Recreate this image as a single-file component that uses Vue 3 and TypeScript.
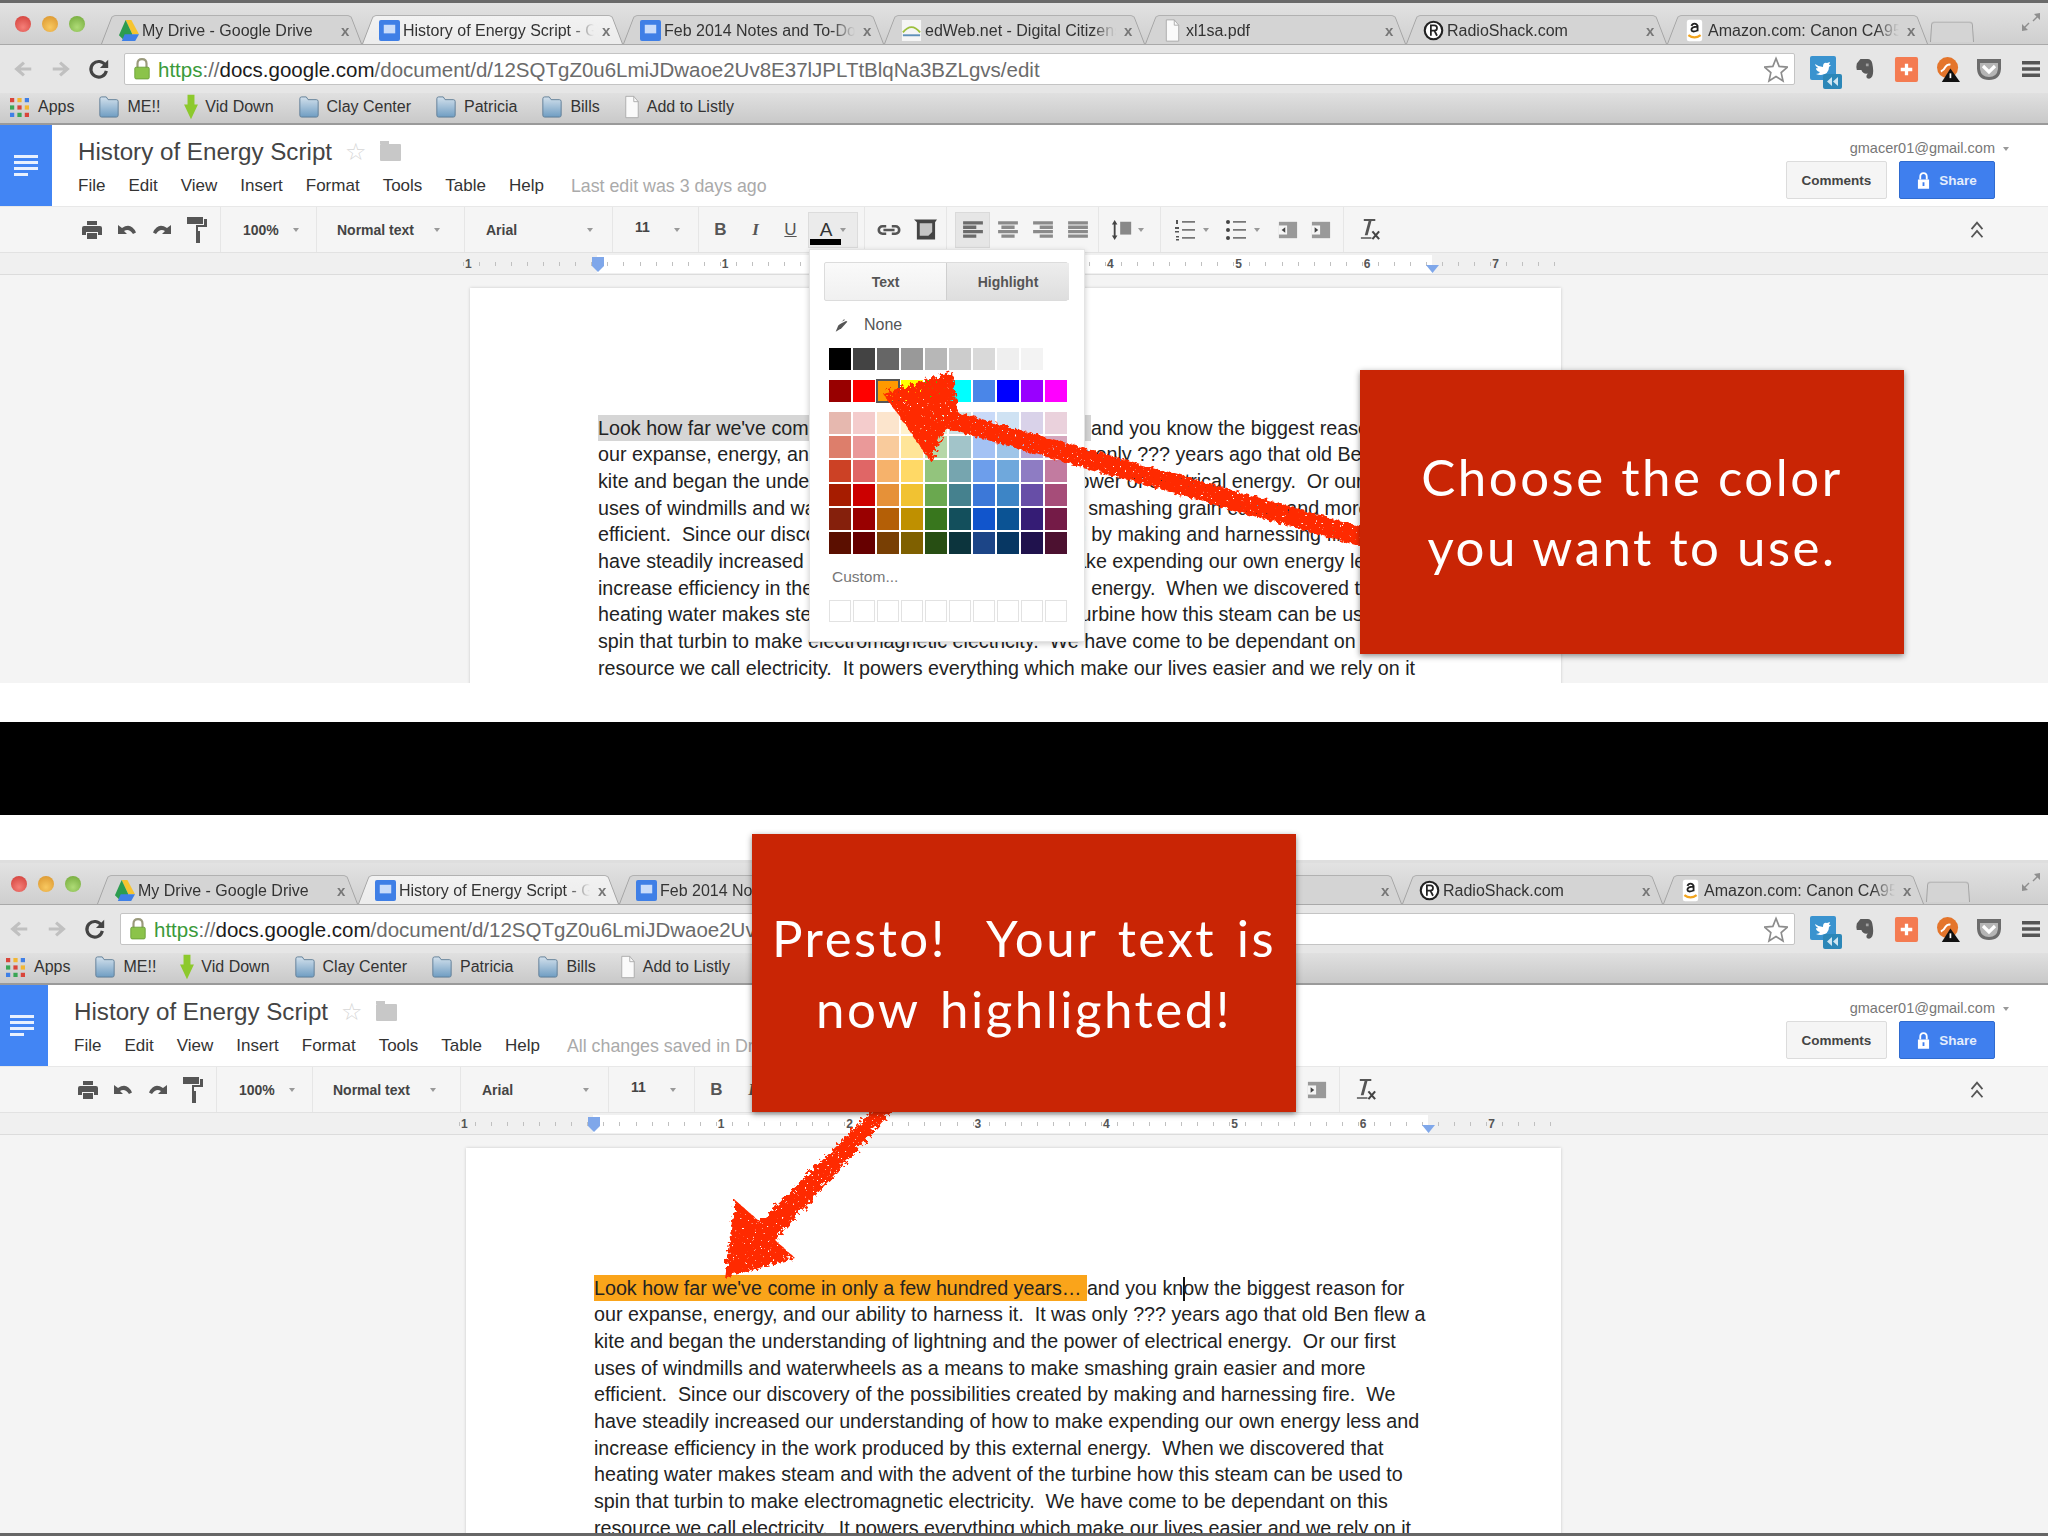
<!-- two frames of a "highlight your text" tutorial slide -->
<template>
  <div class="stage">
    <svg class="sprite" width="0" height="0" aria-hidden="true">
      <defs>
        <linearGradient id="folder-fill" x1="0" y1="0" x2="0" y2="1">
          <stop offset="0" stop-color="#d2e0ec" />
          <stop offset="1" stop-color="#6f9dc2" />
        </linearGradient>
        <filter id="rough" x="-10%" y="-10%" width="120%" height="120%">
          <feTurbulence type="fractalNoise" baseFrequency="0.22" numOctaves="3" seed="4" result="n" />
          <feDisplacementMap in="SourceGraphic" in2="n" scale="10" result="shape" />
          <feTurbulence type="fractalNoise" baseFrequency="0.4" numOctaves="2" seed="9" />
          <feColorMatrix type="matrix" values="0 0 0 0 0  0 0 0 0 0  0 0 0 0 0  -14 0 0 0 10.8" result="holes" />
          <feComposite in="shape" in2="holes" operator="in" />
        </filter>
      </defs>
      <symbol id="i-folder" viewBox="0 0 24 26">
        <path d="M2 4q0-2 2-2h5l2 3h9q2 0 2 2v15q0 2-2 2H4q-2 0-2-2z" fill="url(#folder-fill)" stroke="#5d7c95" />
      </symbol>
      <symbol id="i-page" viewBox="0 0 18 26">
        <path d="M2 1h9l5 6v18H2z" fill="#fafafa" stroke="#a8a8a8" />
        <path d="M11 1v6h5" fill="none" stroke="#a8a8a8" />
      </symbol>
      <symbol id="i-docs" viewBox="0 0 22 24">
        <rect x="0" y="1" width="22" height="22" rx="2" fill="#3f7fe6" />
        <rect x="5" y="6" width="12" height="9" fill="#c9dcfa" />
      </symbol>
      <symbol id="i-drive" viewBox="0 0 22 24">
        <path d="M8 1h6l8 15h-7z" fill="#f6c42f" />
        <path d="M8 1l7 15-4 7H7L1 17z" fill="#2c9c4f" />
        <path d="M7 16h15l-4 7H4z" fill="#3f7fe6" />
      </symbol>
      <symbol id="i-edweb" viewBox="0 0 22 24">
        <rect x="1" y="1" width="20" height="22" fill="#f5f5f5" />
        <path d="M2 14q9-11 18 0" fill="none" stroke="#9cbf3c" stroke-width="2" />
        <path d="M2 17h18" stroke="#5e8fb8" stroke-width="2" />
      </symbol>
      <symbol id="i-radio" viewBox="0 0 24 24">
        <circle cx="12" cy="12" r="10" fill="#fff" stroke="#222" stroke-width="2.4" />
        <path d="M9 18V6h4q3 0 3 3t-3 3H9m4 0l3 6" fill="none" stroke="#222" stroke-width="2" />
      </symbol>
      <symbol id="i-amazon" viewBox="0 0 22 30">
        <rect x="1" y="1" width="20" height="28" rx="3" fill="#fff" />
        <path d="M7 9q1-3 4-3t4 3v7m0-6q-8 0-8 4t8 1" fill="none" stroke="#222" stroke-width="2.4" />
        <path d="M3 21q8 6 16 0" fill="none" stroke="#f2a41e" stroke-width="3" />
      </symbol>
      <symbol id="i-back" viewBox="0 0 24 24"><path d="M21 12H8m5-7l-8 7 8 7" fill="none" stroke="currentColor" stroke-width="3.4" /></symbol>
      <symbol id="i-forward" viewBox="0 0 24 24"><path d="M3 12h13m-5-7l8 7-8 7" fill="none" stroke="currentColor" stroke-width="3.4" /></symbol>
      <symbol id="i-reload" viewBox="0 0 24 24">
        <path d="M19 8a8.5 8.5 0 1 0 1 6" fill="none" stroke="currentColor" stroke-width="3.4" />
        <path d="M22 2v9h-9z" fill="currentColor" />
      </symbol>
      <symbol id="i-lock" viewBox="0 0 20 26">
        <path d="M5 12V7q0-5 5-5t5 5v5" fill="none" stroke="#9a9a7c" stroke-width="2.4" />
        <rect x="2" y="11" width="16" height="13" rx="1.5" fill="#8bc34a" stroke="#6b9f3a" />
      </symbol>
      <symbol id="i-star" viewBox="0 0 26 28">
        <path d="M13 2l3.4 8.6 9 .8-6.8 6 2 9L13 21.600l-7.600 4.800 2-9-6.800-6 9-.8z" fill="#fff" stroke="#8c8c8c" stroke-width="1.8" />
      </symbol>
      <symbol id="i-twitter" viewBox="0 0 34 34">
        <rect x="0" y="0" width="26" height="24" rx="2" fill="#3a93cf" />
        <path d="M5 8q4 3 8 3 0-5 4-4l3-1-1 3 2 0-2 2q0 7-8 8-3 0-5-1 3 0 4-2-4-1-4-4 1 .5 2 0-3-2-3-4z" fill="#fff" />
        <rect x="13" y="18" width="19" height="15" rx="2" fill="#2c87b8" />
        <path d="M17 25.500l5-4.500v9zM23 25.500l5-4.500v9z" fill="#cfe6f2" />
      </symbol>
      <symbol id="i-evernote" viewBox="0 0 22 28">
        <path d="M6 3h8q4 0 5 5 2 9 0 14-2 4-6 2-1-3 1-5-5 1-7-4H2q-1-3 0-7z" fill="#595959" />
        <path d="M12 8h3v3h-3z" fill="#a0a0a0" />
      </symbol>
      <symbol id="i-plus" viewBox="0 0 26 26">
        <rect x="1" y="0" width="24" height="26" rx="2" fill="#f47b51" />
        <path d="M13 7v12M7 13h12" stroke="#fff" stroke-width="3.400" />
      </symbol>
      <symbol id="i-peak" viewBox="0 0 24 28">
        <circle cx="11" cy="12" r="11" fill="#e4752b" />
        <path d="M4 16q3-1 5-5 2-3 5-2" fill="none" stroke="#fff" stroke-width="2.200" />
        <path d="M14 13l10 14H5z" fill="#111" />
        <path d="M14 18v5" stroke="#fff" stroke-width="1.800" />
      </symbol>
      <symbol id="i-pocket" viewBox="0 0 26 24">
        <path d="M1 2h24v10q-1 11-12 11T1 12z" fill="#6c6c6c" />
        <path d="M4 6h18v6q-1 8-9 8t-9-8z" fill="#b5b5b5" />
        <path d="M7 9l6 6 6-6" fill="none" stroke="#fff" stroke-width="3.200" />
      </symbol>
      <symbol id="i-menu" viewBox="0 0 18 18"><path d="M0 1h18v3.400H0zM0 7.300h18v3.400H0zM0 13.600h18V17H0z" fill="#555" /></symbol>
      <symbol id="i-expand" viewBox="0 0 18 18">
        <path d="M18 0v7l-2.500-2.500-4 4-1-1 4-4L12 1zM0 18v-7l2.500 2.500 4-4 1 1-4 4L6 17z" fill="#8f8f8f" />
      </symbol>
      <symbol id="i-apps" viewBox="0 0 18 18">
        <g v-for="cell in appDots" :key="cell.id">
          <rect :x="cell.x" :y="cell.y" width="4" height="4" :fill="cell.fill" />
        </g>
      </symbol>
      <symbol id="i-bolt" viewBox="0 0 16 30">
        <path d="M4 1h8v11h4L8 29 0 12h4z" fill="#8dc92d" />
      </symbol>
      <symbol id="i-print" viewBox="0 0 22 22">
        <path d="M6 2h10v4H6zM3 7h16q2 0 2 2v7h-4v-3H5v3H1V9q0-2 2-2zM6 14h10v6H6z" fill="#555" />
      </symbol>
      <symbol id="i-undo" viewBox="0 0 22 22"><path d="M2 6v9h9l-3-3q5-3 9 3l3-1.500Q15 3 6 9z" fill="#555" /></symbol>
      <symbol id="i-redo" viewBox="0 0 22 22"><path d="M20 6v9h-9l3-3q-5-3-9 3l-3-1.500Q7 3 16 9z" fill="#555" /></symbol>
      <symbol id="i-roller" viewBox="0 0 22 28">
        <path d="M1 1h16v7H1zM18 3h3v8H12v4h2v12h-4V15h0V9h8z" fill="#555" />
      </symbol>
      <symbol id="i-link" viewBox="0 0 28 16">
        <path d="M11 4H7a4 4 0 0 0 0 8h4M17 4h4a4 4 0 0 1 0 8h-4M8 8h12" fill="none" stroke="#555" stroke-width="2.800" />
      </symbol>
      <symbol id="i-comment" viewBox="0 0 24 24">
        <path d="M0 1h24l-2 3v18H3V4z" fill="#444" />
        <path d="M6 5h13v9l-4 4H6z" fill="#c4c4c4" />
      </symbol>
      <symbol id="i-align-left" viewBox="0 0 20 20"><path d="M1 2h18v3H1zM1 6h12v3H1zM1 10h18v3H1zM1 14h12v3H1z" fill="#6b6b6b" /></symbol>
      <symbol id="i-align-center" viewBox="0 0 20 20"><path d="M1 2h18v3H1zM4 6h12v3H4zM1 10h18v3H1zM4 14h12v3H4z" fill="#8a8a8a" /></symbol>
      <symbol id="i-align-right" viewBox="0 0 20 20"><path d="M1 2h18v3H1zM7 6h12v3H7zM1 10h18v3H1zM7 14h12v3H7z" fill="#8a8a8a" /></symbol>
      <symbol id="i-align-just" viewBox="0 0 20 20"><path d="M1 2h18v3H1zM1 6h18v3H1zM1 10h18v3H1zM1 14h18v3H1z" fill="#8a8a8a" /></symbol>
      <symbol id="i-spacing" viewBox="0 0 24 24">
        <path d="M4 1l3 5H1zM4 23l3-5H1zM3 6h2v12H3z" fill="#444" />
        <path d="M10 3h12v14H10z" fill="#888" />
      </symbol>
      <symbol id="i-numbers" viewBox="0 0 22 24">
        <path d="M2 2h2v4H2zM1 9h4v2H1zM1 13h4v1.500H1zM2 18h3v1.500H2zM2 21h3v1.500H2z" fill="#555" />
        <path d="M8 3h13v1.800H8zM8 11h13v1.800H8zM8 19h13v1.800H8z" fill="#777" />
      </symbol>
      <symbol id="i-bullets" viewBox="0 0 22 24">
        <circle cx="3" cy="4" r="2" fill="#444" /><circle cx="3" cy="12" r="2" fill="#444" /><circle cx="3" cy="20" r="2" fill="#444" />
        <path d="M8 3h13v1.800H8zM8 11h13v1.800H8zM8 19h13v1.800H8z" fill="#777" />
      </symbol>
      <symbol id="i-outdent" viewBox="0 0 22 20">
        <path d="M1 1h20v18H1z" fill="#999" /><path d="M1 5h9v10H1z" fill="#f5f5f5" /><path d="M8 7l-4 3 4 3z" fill="#444" />
      </symbol>
      <symbol id="i-indent" viewBox="0 0 22 20">
        <path d="M1 1h20v18H1z" fill="#999" /><path d="M1 5h9v10H1z" fill="#f5f5f5" /><path d="M4 7l4 3-4 3z" fill="#444" />
      </symbol>
      <symbol id="i-clear" viewBox="0 0 24 26">
        <path d="M5 2h12v2h-4L9 19H6l4-15H5zM2 21h11v1.600H2z" fill="#555" />
        <path d="M14 15l7 8m0-8l-7 8" stroke="#444" stroke-width="2.200" />
      </symbol>
      <symbol id="i-collapse" viewBox="0 0 16 22">
        <path d="M2 10l6-7 6 7M2 19l6-7 6 7" fill="none" stroke="#555" stroke-width="2" />
      </symbol>
      <symbol id="i-share-lock" viewBox="0 0 14 20">
        <path d="M3.500 9V6q0-4 3.500-4t3.500 4v3" fill="none" stroke="#fff" stroke-width="2" />
        <path d="M1 9h12v10H1zM6 12v4h2v-4z" fill="#fff" fill-rule="evenodd" />
      </symbol>
      <symbol id="i-none" viewBox="0 0 18 20">
        <path d="M2 18l3-7 7-8 4 3-7 8z" fill="#555" /><path d="M1 11L17 3" stroke="#fff" stroke-width="1.500" />
      </symbol>
    </svg>

    <section v-for="shot in shots" :key="shot.id" class="shot" :class="`shot--${shot.id}`">
      <div class="browser">
        <div class="tabstrip">
          <div class="lights">
            <span class="light light--red"></span>
            <span class="light light--amber"></span>
            <span class="light light--green"></span>
          </div>
          <div
            v-for="tab in tabs"
            :key="tab.title"
            class="tab"
            :class="{ 'tab--active': tab.active }"
          >
            <svg class="tab-icon"><use :href="`#i-${tab.icon}`" /></svg>
            <span class="tab-title">{{ tab.title }}</span>
            <span class="tab-close">x</span>
          </div>
          <div class="tab tab--new"></div>
          <svg class="expand"><use href="#i-expand" /></svg>
        </div>

        <div class="omnibar">
          <div class="nav">
            <svg class="nav-icon nav-icon--off"><use href="#i-back" /></svg>
            <svg class="nav-icon nav-icon--off"><use href="#i-forward" /></svg>
            <svg class="nav-icon"><use href="#i-reload" /></svg>
          </div>
          <div class="urlbar">
            <svg class="lock"><use href="#i-lock" /></svg>
            <span class="url"><span class="url-scheme">https</span><span class="url-dim">://</span><span class="url-host">docs.google.com</span><span class="url-dim">/document/d/12SQTgZ0u6LmiJDwaoe2Uv8E37lJPLTtBlqNa3BZLgvs/edit</span></span>
            <svg class="star"><use href="#i-star" /></svg>
          </div>
          <div class="extensions">
            <svg class="ext ext--twitter"><use href="#i-twitter" /></svg>
            <svg class="ext ext--evernote"><use href="#i-evernote" /></svg>
            <svg class="ext ext--plus"><use href="#i-plus" /></svg>
            <svg class="ext ext--peak"><use href="#i-peak" /></svg>
            <svg class="ext ext--pocket"><use href="#i-pocket" /></svg>
            <svg class="ext ext--menu"><use href="#i-menu" /></svg>
          </div>
        </div>

        <div class="bookmarks">
          <div v-for="mark in bookmarks" :key="mark.label" class="bookmark">
            <svg class="bookmark-icon" :class="`bookmark-icon--${mark.icon}`"><use :href="`#i-${mark.icon}`" /></svg>
            <span>{{ mark.label }}</span>
          </div>
        </div>

        <header class="doc-header">
          <div class="doc-logo">
            <span></span><span></span><span></span><span class="short"></span>
          </div>
          <div class="doc-meta">
            <div class="doc-title-row">
              <span class="doc-title">History of Energy Script</span>
              <span class="doc-star">☆</span>
              <span class="doc-folder"></span>
            </div>
            <nav class="doc-menu">
              <span v-for="item in menu" :key="item">{{ item }}</span>
              <span class="doc-status">{{ shot.status }}</span>
            </nav>
          </div>
          <div class="doc-account">
            <div class="doc-email">gmacer01@gmail.com <i class="caret"></i></div>
            <div class="doc-actions">
              <button class="btn-comments">Comments</button>
              <button class="btn-share"><svg class="share-lock"><use href="#i-share-lock" /></svg>Share</button>
            </div>
          </div>
        </header>

        <div class="toolbar">
          <div class="group group--history">
            <svg v-for="name in ['print', 'undo', 'redo', 'roller']" :key="name" class="tool" :class="`tool--${name}`"><use :href="`#i-${name}`" /></svg>
          </div>
          <div class="group group--zoom"><span>100%</span><i class="caret"></i></div>
          <div class="group group--style"><span>Normal text</span><i class="caret"></i></div>
          <div class="group group--font"><span>Arial</span><i class="caret"></i></div>
          <div class="group group--size"><span class="size-num">11</span><i class="caret"></i></div>
          <div class="group group--format">
            <span class="fmt fmt--b">B</span>
            <span class="fmt fmt--i">I</span>
            <span class="fmt fmt--u">U</span>
            <span class="fmt fmt--a" :class="{ 'fmt--open': shot.popup }">A<i class="caret"></i><em></em></span>
          </div>
          <div class="group group--insert">
            <svg class="tool tool--link"><use href="#i-link" /></svg>
            <svg class="tool tool--comment"><use href="#i-comment" /></svg>
          </div>
          <div class="group group--align">
            <span class="align align--on"><svg class="tool"><use href="#i-align-left" /></svg></span>
            <span class="align"><svg class="tool"><use href="#i-align-center" /></svg></span>
            <span class="align"><svg class="tool"><use href="#i-align-right" /></svg></span>
            <span class="align"><svg class="tool"><use href="#i-align-just" /></svg></span>
          </div>
          <div class="group group--spacing">
            <svg class="tool"><use href="#i-spacing" /></svg><i class="caret"></i>
          </div>
          <div class="group group--lists">
            <svg class="tool"><use href="#i-numbers" /></svg><i class="caret"></i>
            <svg class="tool"><use href="#i-bullets" /></svg><i class="caret"></i>
            <svg class="tool tool--indent"><use href="#i-outdent" /></svg>
            <svg class="tool tool--indent"><use href="#i-indent" /></svg>
          </div>
          <div class="group group--clear">
            <svg class="tool tool--clear"><use href="#i-clear" /></svg>
          </div>
          <svg class="tool tool--collapse"><use href="#i-collapse" /></svg>
        </div>

        <div class="ruler">
          <div class="ruler-scale">
            <span v-for="(n, i) in rulerNumbers" :key="i" class="ruler-num">{{ n }}</span>
            <i class="ruler-marker ruler-marker--left"></i>
            <i class="ruler-marker ruler-marker--right"></i>
          </div>
        </div>

        <main class="doc-area">
          <article class="page">
            <p class="line">
              <mark :class="shot.popup ? 'sel' : 'hl'">Look how far we've come in only a few hundred years… </mark>and you kn<i v-if="!shot.popup" class="cursor"></i>ow the biggest reason for
            </p>
            <p v-for="line in lines" :key="line" class="line">{{ line }}</p>
          </article>
        </main>

        <div v-if="shot.popup" class="palette">
          <div class="palette-tabs">
            <span>Text</span>
            <span class="on">Highlight</span>
          </div>
          <div class="palette-none">
            <svg class="none-icon"><use href="#i-none" /></svg>
            <span>None</span>
          </div>
          <div class="swatches swatches--grey">
            <i v-for="c in greys" :key="c" class="swatch" :style="{ background: c }"></i>
          </div>
          <div class="swatches swatches--vivid">
            <i
              v-for="c in vivid"
              :key="c"
              class="swatch"
              :class="{ 'swatch--picked': c === '#ff9900' }"
              :style="{ background: c }"
            ></i>
          </div>
          <div class="swatches swatches--shades">
            <i v-for="c in shades" :key="c" class="swatch" :style="{ background: c }"></i>
          </div>
          <div class="palette-custom">Custom...</div>
          <div class="swatches swatches--custom">
            <i v-for="n in 10" :key="n" class="swatch swatch--empty"></i>
          </div>
        </div>
      </div>
    </section>

    <div class="band"></div>

    <svg class="ink" width="2048" height="1536" viewBox="0 0 2048 1536">
      <polygon filter="url(#rough)" fill="#ff2a00" points="883,393 953,372 957,412 1366,528 1366,548 945,428 931,462" />
      <polygon filter="url(#rough)" fill="#ff2a00" points="875,1108 895,1108 775,1240 795,1258 724,1278 735,1200 760,1222" />
    </svg>

    <div class="callout callout--choose">Choose the color<br />you want to use.</div>
    <div class="callout callout--presto">Presto!&nbsp; Your text is<br />now highlighted!</div>
  </div>
</template>

<script setup lang="ts">
interface Tab {
  title: string
  icon: string
  active?: boolean
}

const shots = [
  { id: 'choose', status: 'Last edit was 3 days ago', popup: true },
  { id: 'presto', status: 'All changes saved in Drive', popup: false }
]

const tabs: Tab[] = [
  { title: 'My Drive - Google Drive', icon: 'drive' },
  { title: 'History of Energy Script - Google Docs', icon: 'docs', active: true },
  { title: 'Feb 2014 Notes and To-Do List', icon: 'docs' },
  { title: 'edWeb.net - Digital Citizenship', icon: 'edweb' },
  { title: 'xl1sa.pdf', icon: 'page' },
  { title: 'RadioShack.com', icon: 'radio' },
  { title: 'Amazon.com: Canon CA950', icon: 'amazon' }
]

const bookmarks = [
  { label: 'Apps', icon: 'apps' },
  { label: 'ME!!', icon: 'folder' },
  { label: 'Vid Down', icon: 'bolt' },
  { label: 'Clay Center', icon: 'folder' },
  { label: 'Patricia', icon: 'folder' },
  { label: 'Bills', icon: 'folder' },
  { label: 'Add to Listly', icon: 'page' }
]

const menu = ['File', 'Edit', 'View', 'Insert', 'Format', 'Tools', 'Table', 'Help']
const rulerNumbers = ['1', '', '1', '2', '3', '4', '5', '6', '7']

const lines = [
  'our expanse, energy, and our ability to harness it.  It was only ??? years ago that old Ben flew a',
  'kite and began the understanding of lightning and the power of electrical energy.  Or our first',
  'uses of windmills and waterwheels as a means to make smashing grain easier and more',
  'efficient.  Since our discovery of the possibilities created by making and harnessing fire.  We',
  'have steadily increased our understanding of how to make expending our own energy less and',
  'increase efficiency in the work produced by this external energy.  When we discovered that',
  'heating water makes steam and with the advent of the turbine how this steam can be used to',
  'spin that turbin to make electromagnetic electricity.  We have come to be dependant on this',
  'resource we call electricity.  It powers everything which make our lives easier and we rely on it'
]

const appColors = ['#d9453a', '#f2b632', '#3f7fe6', '#3aa655', '#d9453a', '#f2b632', '#3f7fe6', '#3aa655', '#d9453a']
const appDots = appColors.map((fill, i) => ({
  id: i,
  fill,
  x: (i % 3) * 7,
  y: Math.floor(i / 3) * 7
}))

const greys = ['#000000', '#434343', '#666666', '#999999', '#b7b7b7', '#cccccc', '#d9d9d9', '#efefef', '#f3f3f3', '#ffffff']
const vivid = ['#980000', '#ff0000', '#ff9900', '#ffff00', '#00ff00', '#00ffff', '#4a86e8', '#0000ff', '#9900ff', '#ff00ff']
const shades = [
  '#e6b8af', '#f4cccc', '#fce5cd', '#fff2cc', '#d9ead3', '#d0e0e3', '#c9daf8', '#cfe2f3', '#d9d2e9', '#ead1dc',
  '#dd7e6b', '#ea9999', '#f9cb9c', '#ffe599', '#b6d7a8', '#a2c4c9', '#a4c2f4', '#9fc5e8', '#b4a7d6', '#d5a6bd',
  '#cc4125', '#e06666', '#f6b26b', '#ffd966', '#93c47d', '#76a5af', '#6d9eeb', '#6fa8dc', '#8e7cc3', '#c27ba0',
  '#a61c00', '#cc0000', '#e69138', '#f1c232', '#6aa84f', '#45818e', '#3c78d8', '#3d85c6', '#674ea7', '#a64d79',
  '#85200c', '#990000', '#b45f06', '#bf9000', '#38761d', '#134f5c', '#1155cc', '#0b5394', '#351c75', '#741b47',
  '#5b0f00', '#660000', '#783f04', '#7f6000', '#274e13', '#0c343d', '#1c4587', '#073763', '#20124d', '#4c1130'
]
</script>

<style>
html,
body {
  margin: 0;
  background: #fff;
}
</style>

<style scoped>
.stage {
  position: relative;
  width: 2048px;
  height: 1536px;
  overflow: hidden;
  background: #fff;
  display: grid;
  grid-template-rows: 722px 93px 721px;
  font-family: 'Liberation Sans', Arial, sans-serif;
}

.sprite {
  position: absolute;
}

.shot {
  grid-column: 1;
  overflow: hidden;
  box-sizing: border-box;
  background: #fff;
}

.shot--choose {
  grid-row: 1;
  padding-bottom: 39px;
}

.shot--presto {
  grid-row: 3;
  padding-top: 45px;
  border-bottom: 3px solid #666;
}

.band {
  grid-row: 2;
  grid-column: 1;
  background: #000;
}

.browser {
  position: relative;
  display: flex;
  flex-direction: column;
  height: 100%;
  box-sizing: border-box;
  border-top: 3px solid #6a6a6a;
  filter: blur(0.6px);
}

.shot--presto .browser {
  width: 2052px;
  margin-left: -4px;
  border-top-color: #dedede;
}

/* tab strip */
.tabstrip {
  position: relative;
  display: flex;
  align-items: flex-end;
  flex: none;
  height: 42px;
  background: linear-gradient(#e2e2e2, #cfcfcf);
  border-bottom: 1px solid #a9a9a9;
  box-sizing: border-box;
}

.lights {
  display: flex;
  gap: 11px;
  width: 86px;
  padding-left: 15px;
  box-sizing: border-box;
  align-self: center;
  flex: none;
}

.light {
  width: 16px;
  height: 16px;
  border-radius: 50%;
  flex: none;
}

.light--red {
  background: radial-gradient(circle at 50% 70%, #f57f78, #cf3b36);
}

.light--amber {
  background: radial-gradient(circle at 50% 70%, #f8c860, #d8912a);
}

.light--green {
  background: radial-gradient(circle at 50% 70%, #aedb76, #6fa637);
}

.tab {
  position: relative;
  display: flex;
  align-items: center;
  flex: none;
  width: 261px;
  height: 32px;
  margin-left: 0;
  padding: 5px 9px 0 17px;
  box-sizing: border-box;
  color: #333;
  font-size: 16px;
  z-index: 0;
}

.tabstrip > .lights + .tab {
  margin-left: 15px;
}

.tab::before {
  content: '';
  position: absolute;
  inset: 0;
  z-index: -1;
  background: #d4d4d4;
  border: 1px solid #a3a3a3;
  border-bottom: 0;
  border-radius: 4px 4px 0 0;
  transform: perspective(60px) rotateX(10deg);
  transform-origin: bottom;
}

.tab--active {
  z-index: 1;
}

.tab--active::before {
  background: linear-gradient(#f2f2f2, #ececec);
}

.tab--new {
  width: 44px;
  height: 22px;
  margin: 0 0 2px 2px;
  padding: 0;
}

.tab-icon {
  width: 21px;
  height: 23px;
  margin-right: 3px;
  flex: none;
}

.tab-title {
  flex: 1;
  min-width: 0;
  overflow: hidden;
  white-space: nowrap;
  -webkit-mask-image: linear-gradient(90deg, #000 88%, transparent);
  mask-image: linear-gradient(90deg, #000 88%, transparent);
}

.tab-close {
  flex: none;
  width: 12px;
  margin-left: 8px;
  color: #777;
  font-weight: 700;
  font-size: 15px;
  line-height: 1;
}

.expand {
  position: absolute;
  top: 10px;
  right: 8px;
  width: 18px;
  height: 18px;
}

/* omnibox row */
.omnibar {
  display: flex;
  align-items: center;
  flex: none;
  height: 48px;
  background: #e6e6e6;
}

.nav {
  display: flex;
  align-items: center;
  flex: none;
  width: 124px;
  padding-left: 12px;
  gap: 16px;
  box-sizing: border-box;
}

.nav-icon {
  width: 22px;
  height: 22px;
  color: #444;
}

.nav-icon--off {
  color: #c0c0c0;
}

.urlbar {
  display: flex;
  align-items: center;
  flex: 1;
  min-width: 0;
  height: 32px;
  padding: 0 6px 0 8px;
  background: #fff;
  border: 1px solid #c4c4c4;
  border-radius: 2px;
  box-sizing: border-box;
}

.lock {
  width: 18px;
  height: 24px;
  flex: none;
  margin-right: 7px;
}

.url {
  flex: 1;
  padding-top: 2px;
  font-size: 20.5px;
  white-space: nowrap;
  color: #6b6b6b;
}

.url-scheme {
  color: #3a9a3a;
}

.url-dim {
  color: #6b6b6b;
}

.url-host {
  color: #1b1b1b;
}

.star {
  width: 24px;
  height: 27px;
  flex: none;
}

.extensions {
  position: relative;
  display: flex;
  align-items: center;
  flex: none;
  width: 253px;
  height: 48px;
  padding-left: 15px;
  box-sizing: border-box;
}

.ext {
  flex: none;
}

.ext--twitter {
  width: 34px;
  height: 34px;
  margin-top: 8px;
}

.ext--evernote {
  width: 20px;
  height: 26px;
  margin-left: 11px;
}

.ext--plus {
  width: 25px;
  height: 27px;
  margin-left: 19px;
}

.ext--peak {
  width: 23px;
  height: 27px;
  margin-left: 18px;
}

.ext--pocket {
  width: 26px;
  height: 24px;
  margin-left: 16px;
}

.ext--menu {
  width: 18px;
  height: 18px;
  margin-left: 20px;
}

/* bookmarks */
.bookmarks {
  display: flex;
  align-items: center;
  flex: none;
  gap: 24px;
  height: 32px;
  padding: 0 0 2px 10px;
  box-sizing: border-box;
  background: linear-gradient(#e0e0e0, #c9c9c9);
  border-bottom: 2px solid #9a9a9a;
  color: #333;
  font-size: 16px;
}

.bookmark {
  display: flex;
  align-items: center;
  gap: 7px;
}

.bookmark-icon {
  width: 22px;
  height: 24px;
  flex: none;
}

.bookmark-icon--apps {
  width: 19px;
  height: 19px;
  margin-right: 2px;
}

.bookmark-icon--bolt {
  width: 14px;
  height: 26px;
}

.bookmark-icon--page {
  width: 16px;
  height: 24px;
}

/* docs header */
.doc-header {
  display: flex;
  flex: none;
  height: 81px;
  background: #fff;
}

.doc-logo {
  display: flex;
  flex-direction: column;
  justify-content: center;
  gap: 3px;
  flex: none;
  width: 52px;
  padding: 0 14px;
  box-sizing: border-box;
  background: #4285f4;
}

.doc-logo span {
  display: block;
  height: 3px;
  background: #e8f0fe;
}

.doc-logo .short {
  width: 60%;
}

.doc-meta {
  flex: 1;
  padding: 11px 0 0 26px;
}

.doc-title-row {
  display: flex;
  align-items: center;
  height: 32px;
}

.doc-title {
  font-size: 24.2px;
  color: #444;
}

.doc-star {
  margin-left: 13px;
  color: #d6d6d6;
  font-size: 24px;
  font-family: 'DejaVu Sans', sans-serif;
}

.doc-folder {
  position: relative;
  width: 21px;
  height: 17px;
  margin-left: 13px;
  background: #c8c8c8;
  border-radius: 1px;
}

.doc-folder::before {
  content: '';
  position: absolute;
  top: -3px;
  left: 0;
  width: 9px;
  height: 3px;
  background: #c8c8c8;
}

.doc-menu {
  display: flex;
  gap: 23px;
  margin-top: 8px;
  font-size: 17px;
  color: #333;
}

.doc-status {
  margin-left: 4px;
  font-size: 17.8px;
  color: #aaa;
}

.doc-account {
  flex: none;
  width: 263px;
  padding: 15px 53px 0 0;
  box-sizing: border-box;
  display: flex;
  flex-direction: column;
  align-items: flex-end;
}

.doc-email {
  position: relative;
  font-size: 14.5px;
  color: #777;
  white-space: nowrap;
}

.doc-email .caret {
  position: absolute;
  top: 7px;
  right: -14px;
}

.doc-actions {
  display: flex;
  gap: 12px;
  margin-top: 5px;
}

.btn-comments,
.btn-share {
  height: 38px;
  border-radius: 2px;
  font-family: inherit;
  font-size: 13.5px;
  font-weight: 700;
}

.btn-comments {
  width: 101px;
  border: 1px solid #dcdcdc;
  background: #f5f5f5;
  color: #444;
}

.btn-share {
  display: flex;
  align-items: center;
  justify-content: center;
  gap: 9px;
  width: 96px;
  border: 1px solid #2f6bd0;
  background: #3f7fee;
  color: #e4edfc;
}

.share-lock {
  width: 13px;
  height: 19px;
}

/* formatting toolbar */
.toolbar {
  display: flex;
  align-items: center;
  flex: none;
  height: 46px;
  background: #f5f5f5;
  border-top: 1px solid #e8e8e8;
  box-sizing: border-box;
  font-size: 14px;
  font-weight: 700;
  color: #444;
}

.group {
  position: relative;
  display: flex;
  align-items: center;
  flex: none;
  height: 100%;
  box-sizing: border-box;
  border-right: 1px solid #e6e6e6;
}

.group--history {
  width: 221px;
  padding-left: 81px;
  gap: 13px;
}

.group--zoom {
  width: 96px;
  padding-left: 22px;
  gap: 14px;
}

.group--style {
  width: 148px;
  padding-left: 20px;
  gap: 20px;
}

.group--font {
  width: 148px;
  padding-left: 21px;
  gap: 70px;
}

.group--size {
  width: 86px;
  padding-left: 22px;
  gap: 24px;
}

.size-num {
  margin-top: -5px;
}

.group--format {
  width: 166px;
  padding-left: 4px;
}

.group--insert {
  width: 82px;
  padding-left: 11px;
  gap: 12px;
}

.group--align {
  width: 152px;
  padding-left: 8px;
}

.group--spacing {
  width: 62px;
  padding-left: 12px;
  gap: 5px;
}

.group--lists {
  width: 183px;
  padding-left: 13px;
  gap: 7px;
}

.group--lists .caret + .tool {
  margin-left: 9px;
}

.group--lists .caret + .tool--indent {
  margin-left: 11px;
}

.group--clear {
  width: 60px;
  padding-left: 15px;
  border-right: 0;
}

.tool {
  width: 22px;
  height: 24px;
  flex: none;
}

.tool--print {
  height: 22px;
}

.tool--roller {
  height: 28px;
}

.tool--link {
  width: 26px;
}

.tool--comment {
  width: 23px;
}

.tool--indent {
  width: 20px;
  height: 20px;
  margin-left: 6px;
}

.tool--clear {
  width: 23px;
  height: 25px;
}

.tool--collapse {
  width: 16px;
  height: 20px;
  margin-left: auto;
  margin-right: 63px;
}

.caret {
  display: inline-block;
  flex: none;
  width: 0;
  height: 0;
  border-left: 3px solid transparent;
  border-right: 3px solid transparent;
  border-top: 4px solid #999;
}

.fmt {
  position: relative;
  width: 35px;
  text-align: center;
  font-size: 17px;
  color: #555;
  font-family: 'Liberation Serif', serif;
}

.fmt--i {
  font-style: italic;
}

.fmt--u {
  text-decoration: underline;
  font-family: 'Liberation Sans', sans-serif;
  font-weight: 400;
}

.fmt--b {
  font-family: 'Liberation Sans', sans-serif;
}

.fmt--a {
  display: flex;
  align-items: center;
  justify-content: center;
  gap: 8px;
  width: 50px;
  height: 36px;
  font-family: 'Liberation Sans', sans-serif;
  font-size: 19px;
  font-weight: 400;
  color: #333;
  box-sizing: border-box;
}

.fmt--open {
  background: #ebebeb;
  border: 1px solid #dcdcdc;
}

.fmt--a em {
  position: absolute;
  left: 1px;
  bottom: 2px;
  width: 31px;
  height: 6px;
  background: #000;
}

.align {
  display: flex;
  align-items: center;
  justify-content: center;
  width: 35px;
  height: 36px;
  box-sizing: border-box;
}

.align--on {
  background: #e6e6e6;
  border: 1px solid #dadada;
}

.align .tool {
  width: 22px;
  height: 22px;
}

/* ruler */
.ruler {
  flex: none;
  height: 23px;
  box-sizing: border-box;
  padding-top: 2px;
  background: #f0f0f0;
  border-top: 1px solid #e2e2e2;
  border-bottom: 1px solid #dcdcdc;
}

.ruler-scale {
  position: relative;
  display: flex;
  align-items: center;
  width: 1102px;
  height: 18px;
  margin-left: 463px;
  background:
    linear-gradient(90deg, transparent 134px, #fff 134px, #fff 969px, transparent 969px),
    transparent;
}

.ruler-scale::before {
  content: '';
  position: absolute;
  inset: 7px 0;
  background: repeating-linear-gradient(90deg, #c0c0c0 0 1px, transparent 1px 16.05px);
}

.ruler-num {
  position: relative;
  flex: none;
  width: 128.4px;
  padding-left: 2px;
  box-sizing: border-box;
  font-size: 12px;
  font-weight: 700;
  color: #555;
}

.ruler-marker {
  position: absolute;
}

.ruler-marker--left {
  left: 129px;
  top: 2px;
  width: 12px;
  height: 15px;
  background: #7fa7ea;
  clip-path: polygon(0 0, 100% 0, 100% 60%, 50% 100%, 0 60%);
}

.ruler-marker--right {
  left: 963px;
  top: 10px;
  width: 13px;
  height: 8px;
  background: #7fa7ea;
  clip-path: polygon(0 0, 100% 0, 50% 100%);
}

/* document */
.doc-area {
  flex: 1;
  min-height: 0;
  overflow: hidden;
  padding-top: 13px;
  background: #f4f4f4;
}

.page {
  height: 100%;
  margin: 0 487px 0 470px;
  padding: 126.5px 0 0 128px;
  background: #fff;
  box-shadow: 0 0 3px rgba(0, 0, 0, 0.18);
  color: #222;
  font-size: 19.7px;
  box-sizing: content-box;
}

.line {
  position: relative;
  margin: 0;
  height: 26.7px;
  line-height: 26.7px;
  white-space: pre;
}

.sel,
.hl {
  color: inherit;
  display: inline-block;
  height: 100%;
}

.sel {
  background: #d6d6d6;
}

.hl {
  background: #faa41a;
}

.cursor {
  display: inline-block;
  width: 1.5px;
  height: 24px;
  margin-right: -1.5px;
  vertical-align: middle;
  background: #111;
}

/* colour picker popup */
.palette {
  position: absolute;
  top: 246px;
  left: 809px;
  width: 276px;
  height: 393px;
  padding: 12px 17px 0 14px;
  box-sizing: border-box;
  background: #fff;
  border: 1px solid #e4e4e4;
  box-shadow: 0 2px 6px rgba(0, 0, 0, 0.2);
  color: #555;
  font-size: 15px;
}

.palette-tabs {
  display: grid;
  grid-template-columns: 121px 123px;
  width: 244px;
  height: 39px;
  border: 1px solid #dcdcdc;
  border-radius: 2px;
  box-sizing: border-box;
  font-size: 14px;
  font-weight: 700;
  background: linear-gradient(#fafafa, #f0f0f0);
}

.palette-tabs span {
  display: flex;
  align-items: center;
  justify-content: center;
}

.palette-tabs .on {
  background: linear-gradient(#ededed, #dedede);
  border-left: 1px solid #cfcfcf;
}

.palette-none {
  display: flex;
  align-items: center;
  height: 26px;
  margin-top: 11px;
  padding-left: 10px;
  gap: 15px;
  font-size: 16px;
}

.none-icon {
  width: 15px;
  height: 18px;
}

.swatches {
  display: grid;
  grid-template-columns: repeat(10, 22px);
  gap: 2px;
  margin-left: 5px;
}

.swatches--grey {
  margin-top: 10px;
}

.swatches--vivid {
  margin-top: 10px;
}

.swatches--shades {
  margin-top: 10px;
}

.swatch {
  display: block;
  height: 22px;
}

.swatch--picked {
  outline: 2px solid #555;
  outline-offset: -1px;
}

.swatch--empty {
  background: #fff;
  border: 1px solid #e2e2e2;
  box-sizing: border-box;
}

.palette-custom {
  margin: 11px 0 0 8px;
  height: 24px;
  line-height: 24px;
  font-size: 15.5px;
  color: #777;
}

.swatches--custom {
  margin-top: 11px;
}

/* slide overlays */
.ink {
  position: absolute;
  inset: 0;
  pointer-events: none;
}

.callout {
  position: absolute;
  display: flex;
  align-items: center;
  justify-content: center;
  text-align: center;
  background: #c92505;
  color: #fff;
  box-shadow: 0 2px 6px rgba(0, 0, 0, 0.45);
  font-family: Lato, 'Open Sans', sans-serif;
  font-size: 51px;
  line-height: 70px;
  letter-spacing: 2.5px;
  white-space: nowrap;
}

.callout--choose {
  left: 1360px;
  top: 370px;
  width: 544px;
  height: 284px;
}

.callout--presto {
  left: 752px;
  top: 834px;
  width: 544px;
  height: 278px;
  line-height: 71px;
  word-spacing: 5px;
}
</style>
